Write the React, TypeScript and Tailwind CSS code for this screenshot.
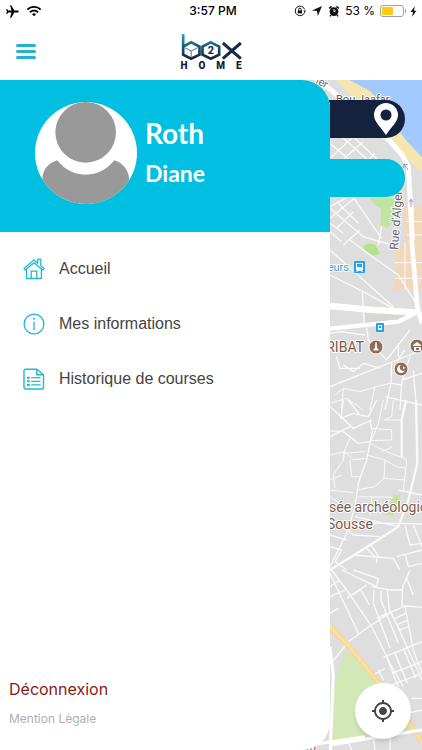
import type { ReactNode } from "react"
import { MdAirplanemodeActive, MdWifi, MdMyLocation } from "react-icons/md"

type MenuEntry = {
	label: string
	icon: ReactNode
}

const HomeIcon = () => (
	<svg viewBox="0 0 22 22" className="size-[22px]" fill="none" stroke="#21b8d3" strokeWidth="1.3" aria-hidden="true">
		<path d="M1 10.5 11 2l3.800 3.200V1.200h3v6.600l3.200 2.700-1.300 1.600L11 4.800l-8.700 7.300Z" strokeLinejoin="round" />
		<path d="M3.600 11.200v9.300h14.800v-9.300M8.200 20.500v-7.300h5.600v7.300" />
	</svg>
)

const InfoIcon = () => (
	<svg viewBox="0 0 22 22" className="size-[22px]" fill="none" stroke="#21b8d3" strokeWidth="1.3" aria-hidden="true">
		<circle cx="11" cy="11" r="9.900" />
		<path d="M11 8.800v8.400" />
		<circle cx="11" cy="5.800" r="1" fill="#21b8d3" stroke="none" />
	</svg>
)

const HistoryIcon = () => (
	<svg viewBox="0 0 22 22" className="size-[22px]" fill="none" stroke="#21b8d3" strokeWidth="1.4" aria-hidden="true">
		<path d="M2.500 1.200h11.300l6.700 5.600v12.400q0 1.800-1.800 1.800H2.600Q1 21 1 19.200V2.800q0-1.600 1.500-1.600Z" />
		<path d="M13.800 1.200v5.600h6.700" />
		<path d="M8.200 9.700h9.400M8.200 13.300h9.400M8.200 16.900h9.400" strokeWidth="1.200" />
		<path d="M4 9.700h2.800M4 13.300h2.800M4 16.900h2.800" strokeWidth="2" />
	</svg>
)

const menu: MenuEntry[] = [
	{ label: "Accueil", icon: <HomeIcon /> },
	{ label: "Mes informations", icon: <InfoIcon /> },
	{ label: "Historique de courses", icon: <HistoryIcon /> },
]

const StatusBar = () => (
	<div className="grid h-[22px] shrink-0 grid-cols-[1fr_auto_1fr] items-center px-[5px] font-['Inter',sans-serif] text-xs text-black">
		<div className="flex items-center gap-[6px]">
			<MdAirplanemodeActive className="size-[15px] rotate-90" />
			<MdWifi className="size-4" />
		</div>
		<span className="pl-1 font-medium">3:57 PM</span>
		<div className="flex items-center justify-end gap-[5px]">
			<svg viewBox="0 0 12 12" className="size-3" fill="none" stroke="#111" strokeWidth="1" aria-hidden="true">
				<path d="M10.6 7.4A4.8 4.8 0 1 1 10.6 4.4" />
				<path d="m9.2 5.4 1.600 2 1.200-2Z" fill="#111" stroke="none" />
				<rect x="3.8" y="5.4" width="4.2" height="3" fill="#111" stroke="none" />
				<path d="M4.600 5.600V4.400q0-1.200 1.300-1.200t1.300 1.200v1.200" />
			</svg>
			<svg viewBox="0 0 12 12" className="size-3" fill="#111" aria-hidden="true">
				<path d="M11 1 6.800 11 6 6 1 5.600Z" />
			</svg>
			<svg viewBox="0 0 12 12" className="size-3" aria-hidden="true">
				<circle cx="6" cy="6.6" r="4.4" fill="#111" />
				<path d="M1.200 3.400 3.600 1.400M10.800 3.400 8.400 1.400M3 10l-1 1.400M9 10l1 1.400" stroke="#111" strokeWidth="1.5" />
				<path d="M6 4v2.800l1.800-1" fill="none" stroke="#fff" strokeWidth="1" />
			</svg>
			<span className="whitespace-nowrap">53 %</span>
			<div className="flex items-center gap-px">
				<div className="h-3 w-6 rounded-[3px] border border-gray-400 p-px">
					<div className="h-full w-[53%] rounded-[1px] bg-[#ffc90e]" />
				</div>
				<div className="h-1 w-px bg-gray-400" />
				<svg viewBox="0 0 8 12" className="ml-[3px] h-[11px] w-[7px]" fill="#111" aria-hidden="true">
					<path d="M5.500 0 0.600 6.600h2.800L2.400 12l5-7H4.600Z" />
				</svg>
			</div>
		</div>
	</div>
)

const Logo = () => (
	<div className="w-[61px] pt-1" role="img" aria-label="Box2Home">
		<svg viewBox="36 18 180 78" className="h-[26px] w-full" fill="none" aria-hidden="true">
			<defs>
				<linearGradient id="ink" x1="0" y1="20" x2="0" y2="94" gradientUnits="userSpaceOnUse">
					<stop offset="0" stopColor="#2fa3b8" />
					<stop offset="0.45" stopColor="#1d5d78" />
					<stop offset="1" stopColor="#131d3d" />
				</linearGradient>
			</defs>
			<g stroke="url(#ink)" strokeWidth="8">
				<path d="M41 18v62L65 92 90 80V56L65 43 41 56" />
				<path d="M124 43 149 56v24l-25 12-25-12V56Z" />
			</g>
			<path d="M46 59 65 69 85 59M65 69v20" stroke="#53768c" strokeWidth="3" />
			<path d="M160 45 214 92M214 45 160 92" stroke="#17294a" strokeWidth="9" />
			<text x="124" y="79" textAnchor="middle" fontFamily="Inter, sans-serif" fontWeight="800" fontSize="29" fill="#17294a">
				2
			</text>
		</svg>
		<div className="flex justify-between font-['Roboto',sans-serif] text-[10px] leading-[12px] font-black text-[#151c38]">
			<span>H</span>
			<span>O</span>
			<span>M</span>
			<span>E</span>
		</div>
	</div>
)

const Avatar = () => (
	<svg viewBox="0 0 306 306" className="size-[102px] shrink-0" role="img" aria-label="Photo de profil">
		<clipPath id="avatar">
			<circle cx="153" cy="153" r="153" />
		</clipPath>
		<g clipPath="url(#avatar)">
			<rect width="306" height="306" fill="#fff" />
			<circle cx="152" cy="91" r="91" fill="#999" />
			<path d="M22 306v-78q4-40 45-53 34 43 85 43t86-43q40 14 44 53v78Z" fill="#999" />
		</g>
	</svg>
)

// Each group of streets is drawn on its own tile at three units per pixel
const CityMap = () => (
	<svg
		viewBox="0 80 422 670"
		preserveAspectRatio="xMaxYMin slice"
		className="absolute inset-0 size-full"
		fill="none"
		aria-hidden="true">
		<rect y="80" width="422" height="670" fill="#dedede" />

		<g transform="translate(300 75) scale(.33333)" stroke="#fafafa" strokeWidth="4">
			<path d="M110 15H366V292L320 250 240 155Z" fill="#f5e6ae" stroke="none" />
			<path d="M148 15 210 48 250 90 285 150 320 198 366 247V15Z" fill="#a2caff" stroke="none" />
			<path d="M208 368 225 390 243 400 242 450 262 458 280 440 292 368Z" fill="#bfe5a0" stroke="none" />
			<path d="M306 388 366 395V510H318Z" fill="#f0d8bb" stroke="none" />
			<path d="M340 392V510M318 440H366M318 480H366" strokeWidth="3" />
			<path d="M90 205 145 252M90 250 160 185 250 270M120 180 200 252M190 200 130 252M225 235 205 255" />
			<path d="M90 395 140 368M90 430 165 368M90 400 190 485M115 385 175 445M110 460 160 410M90 445 130 475 M160 368 245 490M180 465 130 510M90 470 125 500M245 455 235 510M190 485 275 510" />
			<path d="M40 0 108 58 270 198 305 238 325 275 338 510" stroke="#fff" strokeWidth="15" />
			<path d="m324 285-12-18m-1 12 1-12 12 3M333 395v-22m-6 8 6-8 6 8" stroke="#9795b5" strokeWidth="3" />
		</g>

		<g transform="translate(310 240) scale(.33333)" stroke="#fafafa" strokeWidth="4">
			<path d="M160 20q12-16 35-6l14 24q-8 12-22 6-22-8-27-24Z" fill="#b5e38d" stroke="none" />
			<path d="M255 25 305 0H336V145L253 153Z" fill="#f0d8bb" stroke="none" />
			<path d="M285 8V150M252 68H336M254 115H336" strokeWidth="3" />
			<path d="M165 215H300L290 236 165 250Z" fill="#d8d8d2" stroke="none" />
			<path d="M120 0 200 60 265 105 318 190M60 30 250 200M60 105 160 155 250 205M157 155 163 250" />
			<path d="M60 198 190 210 320 217" stroke="#fff" strokeWidth="19" />
			<path d="M60 266 265 245 320 217" stroke="#fff" strokeWidth="13" />
			<path d="M305 0 322 200 336 250" stroke="#fff" strokeWidth="14" />
			<path d="M170 262 175 300 230 360 300 270M60 280 90 275 165 285M265 310V350M285 330 260 365M60 440 160 400 230 372 336 330M80 350 90 385 150 385M100 375 130 395 160 370 210 385M245 365 243 430 225 510M300 350 275 430 270 510M275 420 336 400M310 390 320 510M245 430 275 435M225 470 336 495" />
			<path d="M75 465 100 445 150 455 200 440 240 430M100 445 95 510M60 490 110 475 160 510M195 440 180 510" strokeWidth="3" />
		</g>

		<g transform="translate(310 400) scale(.33333)" stroke="#fafafa" strokeWidth="4">
			<path d="M250 284H271L262 320 248 346H228Z" fill="#bfe5a0" stroke="none" />
			<path d="M100 0 93 55 130 40 175 50 200 0M115 0 150 45M60 20 95 52 130 85 185 60M60 92 100 95 145 130 180 125M60 110 120 80M180 60 187 95 170 180 145 250 135 320 110 400 60 500" />
			<path d="M220 0 205 70 180 130 230 155 275 172 290 180 280 275M250 0 245 50 222 60 272 60M185 85 245 90 245 120 185 122M170 165 225 180 260 200 285 205M225 180 222 235 285 240M222 235 195 260 140 270M215 155 240 145 245 138M120 115 100 160 165 155M60 165 105 155 130 180 165 175M103 155 100 180 70 225 75 265M120 180 125 230H150M60 240 95 225M60 270 130 278M140 290 250 292M185 290 180 345M60 290 110 325" strokeWidth="3" />
			<path d="M288 0 275 60V172M318 0 322 190 295 300 265 380 165 445 60 510" strokeWidth="7" />
			<path d="M265 270 336 285M135 350 265 380M130 370 265 370 336 372M80 360 130 405 210 410M60 405 110 420M60 440 95 450 75 485 110 510M165 440 200 475V490M180 430 210 475M130 465 250 475 270 510M285 375 300 435 336 430M310 375 336 440M260 470 336 450M285 460 295 500 336 490" />
		</g>

		<g transform="translate(310 570) scale(.33333)" stroke="#fafafa" strokeWidth="4">
			<path d="M105 240 225 340 300 480 165 500 65 520V370Z" fill="#d2e8b7" stroke="none" />
			<path d="M60 10 145 190M65 0 110 60 185 170 245 290 280 350M95 0 200 50 205 25 130 0M60 50 90 30M60 80 105 60M60 130 85 115M110 85 170 45M150 55 178 105M130 75 150 60" />
			<path d="M60 285 115 215 180 168 240 128 285 108 336 112M300 0 278 50 276 108M290 25 310 75M185 50 240 60 275 60M192 60 190 100 240 235M213 60 213 90 265 220M232 60 238 120 270 180M200 145 230 130M245 130 336 330M285 110 310 240 336 310M255 145 288 130M260 165 294 150M265 182 298 168" />
			<path d="M220 262 336 215M245 310 336 275M245 345 336 310M230 262 265 350M255 250 292 340M282 240 318 325M190 315 225 295M205 300 220 330M305 385H336M290 430 336 420" />
			<path d="M60 170 122 235 195 325 240 380 336 515" stroke="#efd28d" strokeWidth="15" />
			<path d="M60 170 122 235 195 325 240 380 336 515" stroke="#fbdf9c" strokeWidth="11" />
			<path d="M60 230 70 320 62 510V540M0 525 165 500M60 525 210 500 336 480" stroke="#fff" strokeWidth="9" />
			<path d="M115 515 125 540M190 505 195 540M240 500V540" />
		</g>

		{/* Transit stops */}
		<g fill="#1fa4e8">
			<rect x="354" y="261" width="11" height="12" rx="1" />
			<rect x="376" y="323" width="8" height="9" rx="1" />
		</g>
		<g fill="#fff">
			<path d="M356 263h7v7h-1l1 2h-1l-1-1h-3l-1 1h-1l1-2h-1Z" />
			<path d="M378 325h4v5h-4Z" />
		</g>
		<g fill="#1fa4e8">
			<path d="M357 264h5v3h-5ZM379 326h2v2h-2Z" />
		</g>

		{/* Places */}
		<g fill="#8d6b57" stroke="#fff" strokeWidth="1">
			<circle cx="376" cy="347" r="7" />
			<circle cx="417" cy="346" r="7" />
			<circle cx="401" cy="369" r="7" />
		</g>
		<path d="M375.300 342.500h1.400l.3 6h1.500v2h-5v-2h1.500Z" fill="#fff" />
		<path d="M413 345l4-3 4 3v1h-8ZM414 347h7v4h-7Z" fill="#fff" />
		<path d="M416 348h3v2h-3Z" fill="#8d6b57" />
		<path d="M401 365a4 4 0 1 0 4 5 3 3 0 0 1-4-5Zm2 1 1 1.500h1.500l-1 1-1.500.5Z" fill="#fff" />

		<g fontFamily="Roboto, sans-serif" stroke="#fff" strokeWidth="2" paintOrder="stroke" strokeLinejoin="round">
			<text x="336" y="103" fontSize="11" fill="#555">
				Bou Jaafar
			</text>
			<text transform="translate(315 83) rotate(27)" fontSize="11" fill="#666">
				ler
			</text>
			<text transform="translate(398 250) rotate(-86)" fontSize="12" fill="#666">
				Rue d'Alger
			</text>
			<text x="349" y="271" textAnchor="end" fontSize="11" fill="#3b9bd0">
				eurs
			</text>
			<g fill="#7b5a48" fontSize="14">
				<text x="364" y="352" textAnchor="end">
					RIBAT
				</text>
				<text x="329" y="512">
					sée archéologic
				</text>
				<text x="327" y="529">
					Sousse
				</text>
			</g>
			<text x="316" y="752" textAnchor="end" fontSize="11" fill="#666">
				rd
			</text>
		</g>
	</svg>
)

const Drawer = () => (
	<aside className="absolute inset-y-0 left-0 flex w-[330px] flex-col overflow-hidden rounded-r-[28px] bg-white">
		<div className="flex h-[152px] items-center gap-2 bg-[#00bfe0] pb-[6px] pl-[35px] font-['Lato',sans-serif] font-bold text-white">
			<Avatar />
			<div>
				<p className="text-[28px] leading-10">Roth</p>
				<p className="text-[23px] leading-10">Diane</p>
			</div>
		</div>
		<nav className="flex flex-1 flex-col pt-[9px]">
			{menu.map((entry) => (
				<a
					key={entry.label}
					href="#"
					className="flex h-[55px] items-center gap-[14px] pl-[23px] font-['Liberation_Sans',sans-serif] text-base text-[#444]">
					{entry.icon}
					{entry.label}
				</a>
			))}
		</nav>
		<div className="flex flex-col items-start gap-2 pb-[21px] pl-[9px] font-['Inter',sans-serif]">
			<button type="button" className="text-base leading-6 text-[#861a1a]">
				Déconnexion
			</button>
			<a href="#" className="text-xs leading-5 text-[#b0b0b0]">
				Mention Lègale
			</a>
		</div>
	</aside>
)

export default function App() {
	return (
		<div className="flex h-screen flex-col overflow-hidden bg-white">
			<StatusBar />
			<header className="grid h-[58px] shrink-0 grid-cols-[1fr_auto_1fr] items-center px-4">
				<button type="button" aria-label="Menu" className="flex w-5 flex-col gap-[3px]">
					<span className="h-[3px] w-full rounded-full bg-[#21b3cf]" />
					<span className="h-[3px] w-full rounded-full bg-[#21b3cf]" />
					<span className="h-[3px] w-full rounded-full bg-[#21b3cf]" />
				</button>
				<Logo />
			</header>

			<main className="relative flex-1 overflow-hidden">
				<CityMap />
				<div className="relative flex flex-col gap-[21px] px-[17px] pt-5">
					<button
						type="button"
						aria-label="Adresse de départ"
						className="flex h-[38px] items-center justify-end rounded-full bg-[#14213f] pr-[7px]">
						<svg viewBox="0 0 24 32" className="h-8 w-6" aria-hidden="true">
							<path d="M12 0a12 12 0 0 1 12 12c0 7-7 12-12 20C7 24 0 19 0 12A12 12 0 0 1 12 0Z" fill="#fff" />
							<circle cx="12" cy="12" r="5.500" fill="#14213f" />
						</svg>
					</button>
					<button type="button" aria-label="Adresse d'arrivée" className="h-[38px] rounded-full bg-[#00bfe0]" />
				</div>
				<Drawer />
				<button
					type="button"
					aria-label="Ma position"
					className="absolute right-[11px] bottom-[11px] flex size-14 items-center justify-center rounded-full bg-white text-[#444] shadow-md">
					<MdMyLocation className="size-6" />
				</button>
			</main>
		</div>
	)
}
